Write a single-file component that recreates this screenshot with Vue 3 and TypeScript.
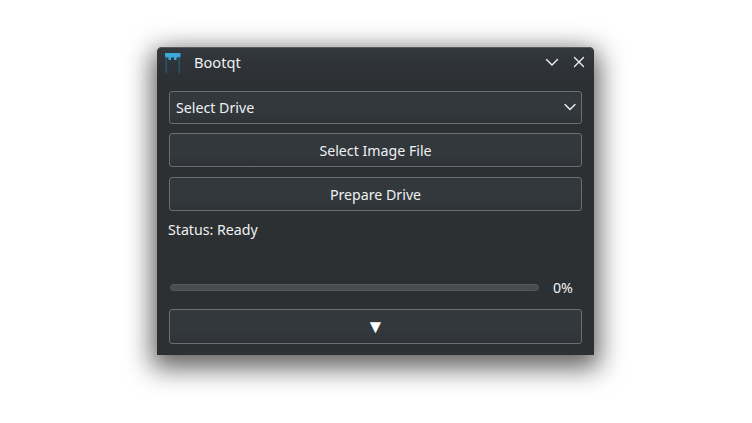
<script setup lang="ts">
const progress = 0;
</script>

<template>
  <div class="page">
    <div class="window">
      <header class="titlebar">
        <svg class="app-icon" width="16" height="21" viewBox="0 0 16 21">
          <path d="M0 0h15.5v4.5H0z" fill="#3ba9dc" />
          <path d="M3.5 4h2.5v3H3.5zM9 4h2.5v3H9z" fill="#3ba9dc" />
          <path d="M1.2 4v16M14.2 4v16" stroke="#255f7c" stroke-width="1.2" fill="none" />
        </svg>
        <span class="title">Bootqt</span>
        <svg class="win-btn" width="14" height="14" viewBox="0 0 14 14">
          <path d="M1.5 4.5 7 10l5.5-5.5" />
        </svg>
        <svg class="win-btn close" width="14" height="14" viewBox="0 0 14 14">
          <path d="M2.5 2.5l9 9M11.5 2.5l-9 9" />
        </svg>
      </header>

      <main class="content">
        <div class="control combo">
          <span>Select Drive</span>
          <svg width="14" height="14" viewBox="0 0 14 14">
            <path d="M2 4.5 7 9.5l5-5" />
          </svg>
        </div>
        <button class="control btn">Select Image File</button>
        <button class="control btn">Prepare Drive</button>
        <div class="status">Status: Ready</div>
        <div class="progress-row">
          <div class="track"></div>
          <span class="percent">{{ progress }}%</span>
        </div>
        <button class="control btn toggle">▼</button>
      </main>
    </div>
  </div>
</template>

<style>
html,
body {
  margin: 0;
  background: #fff;
}
</style>

<style scoped>
.page {
  width: 752px;
  height: 423px;
  padding: 47px 0 0 157px;
  box-sizing: border-box;
  overflow: hidden;
  font-family: "Noto Sans", sans-serif;
  font-size: 14.2px;
  color: #eff1f2;
}

.window {
  width: 437px;
  height: 308px;
  display: flex;
  flex-direction: column;
  background: #2c3033;
  border-radius: 5px 5px 0 0;
  box-shadow: 0 8px 26px 5px rgba(0, 0, 0, 0.62);
}

.titlebar {
  height: 32px;
  display: flex;
  align-items: center;
  padding: 0 8px 3px 8px;
  background: linear-gradient(#33383d, #2c3034);
  border-top: 1px solid #575b5f;
  border-radius: 5px 5px 0 0;
  box-sizing: border-box;
}

.app-icon {
  align-self: flex-start;
  margin-top: 5px;
}

.title {
  margin-left: 13px;
  flex: 1;
  font-size: 14.6px;
}

.win-btn {
  margin-left: 13px;
}

svg path {
  stroke-linecap: round;
}

.win-btn path,
.combo path {
  fill: none;
  stroke: #eff0f1;
  stroke-width: 1.4;
}

.content {
  flex: 1;
  display: flex;
  flex-direction: column;
  padding: 12px 12px 11px 12px;
}

.control {
  width: 413px;
  height: 34px;
  box-sizing: border-box;
  border: 1px solid #6a6e71;
  border-radius: 3px;
  background: linear-gradient(#33383d, #33383d 60%, #2f3337);
  color: #eff1f2;
  font: inherit;
}

.combo {
  height: 33px;
  display: flex;
  align-items: center;
  justify-content: space-between;
  padding: 0 4px 1px 6px;
}

.btn {
  margin-top: 9px;
  padding: 0;
  display: block;
}

.btn + .btn {
  margin-top: 10px;
}

.status {
  margin: 9px 0 0 -1px;
  height: 20px;
  line-height: 20px;
}

.progress-row {
  display: flex;
  align-items: center;
  height: 20px;
  margin-top: 37px;
}

.track {
  width: 369px;
  height: 7px;
  margin-left: 1px;
  box-sizing: border-box;
  background: #474c50;
  border: 1px solid #55595c;
  border-radius: 4px;
}

.percent {
  margin-left: 14px;
}

.btn.toggle {
  margin-top: 12px;
  height: 35px;
  font-size: 19px;
  line-height: 1;
  color: #fff;
}
</style>
